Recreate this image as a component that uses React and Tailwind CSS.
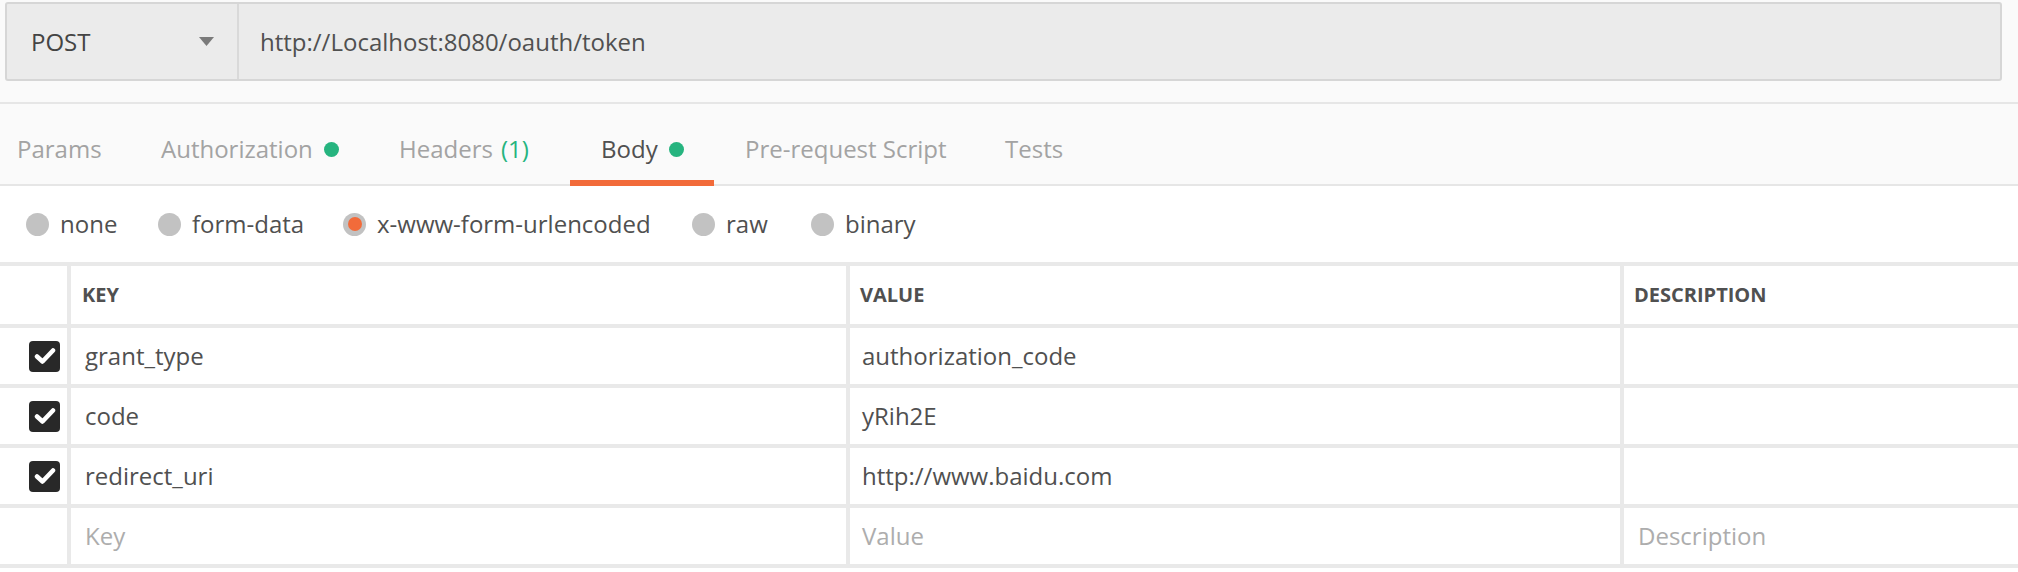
import React from 'react';

const font = { fontFamily: '"Open Sans", "Noto Sans", sans-serif' };

const tabs = [
    { label: 'Params', w: 'w-[130px]', pad: 'pl-[17px]' },
    { label: 'Authorization', w: 'w-[238px]', pad: 'pl-[31px]', dot: true },
    { label: 'Headers', w: 'w-[202px]', pad: 'pl-[31px]', count: '(1)' },
    { label: 'Body', w: 'w-[144px]', pad: 'pl-[31px]', dot: true, active: true },
    { label: 'Pre-request Script', w: 'w-[260px]', pad: 'pl-[31px]' },
    { label: 'Tests', w: 'w-[200px]', pad: 'pl-[31px]' },
];

const modes = [
    { label: 'none', w: 'w-[132px]' },
    { label: 'form-data', w: 'w-[185px]' },
    { label: 'x-www-form-urlencoded', w: 'w-[349px]', selected: true },
    { label: 'raw', w: 'w-[119px]' },
    { label: 'binary', w: 'w-[200px]' },
];

const rows = [
    { key: 'grant_type', value: 'authorization_code' },
    { key: 'code', value: 'yRih2E' },
    { key: 'redirect_uri', value: 'http://www.baidu.com' },
];

function Check() {
    return (
        <div className="ml-[29px] flex h-[31px] w-[31px] items-center justify-center rounded-[4px] bg-[#282828]">
            <svg width="22" height="18" viewBox="0 0 22 18" fill="none">
                <path d="M3 9.5 L8.5 14.5 L19 3.5" stroke="white" strokeWidth="4.5" strokeLinecap="round" strokeLinejoin="round" />
            </svg>
        </div>
    );
}

function Row({ first, children, header }) {
    return (
        <div className={`flex border-b-4 border-[#e9e9e9] ${header ? 'h-[62px]' : 'h-[60px]'}`}>
            <div className="flex w-[67px] shrink-0 items-center">{first}</div>
            {children}
        </div>
    );
}

export default function App() {
    return (
        <div style={font} className="w-[2018px] h-[572px] overflow-hidden bg-white text-[#505050]">
            {/* request line */}
            <div className="h-[104px] border-b-2 border-[#e6e6e6] bg-[#fafafa] pt-[2px] pl-[5px] pr-[16px]">
                <div className="flex h-[79px] rounded-[3px] border-2 border-[#d6d6d6] bg-[#ebebeb]">
                    <div className="flex w-[232px] shrink-0 items-center justify-between border-r-2 border-[#d9d9d9] pl-[24px] pr-[23px]">
                        <span className="text-[24px] text-[#444]">POST</span>
                        <svg width="15" height="9" viewBox="0 0 15 9">
                            <path d="M0 0 H15 L7.5 9 Z" fill="#7a7a7a" />
                        </svg>
                    </div>
                    <div className="flex items-center pl-[21px] text-[24px] text-[#505050]">
                        http://Localhost:8080/oauth/token
                    </div>
                </div>
            </div>

            {/* tabs */}
            <div className="flex h-[82px] border-b-2 border-[#e6e6e6] bg-[#fafafa]">
                {tabs.map((t) => (
                    <div key={t.label} className={`relative flex h-full shrink-0 items-center pt-[10px] ${t.w} ${t.pad}`}>
                        <span className={`text-[24px] ${t.active ? 'text-[#505050]' : 'text-[#a3a3a3]'}`}>{t.label}</span>
                        {t.count && <span className="ml-[8px] text-[24px] text-[#26b47f]">{t.count}</span>}
                        {t.dot && <span className="ml-[11px] h-[15px] w-[15px] rounded-full bg-[#26b47f]" />}
                        {t.active && <div className="absolute bottom-[-2px] left-0 h-[6px] w-full bg-[#f26b3a]" />}
                    </div>
                ))}
            </div>

            {/* body modes */}
            <div className="flex h-[76px] items-center pl-[26px]">
                {modes.map((m) => (
                    <div key={m.label} className={`flex shrink-0 items-center ${m.w}`}>
                        {m.selected ? (
                            <span className="flex h-[23px] w-[23px] items-center justify-center rounded-full bg-[#c2c2c2]">
                                <span className="h-[14px] w-[14px] rounded-full bg-[#f26b3a]" />
                            </span>
                        ) : (
                            <span className="h-[23px] w-[23px] rounded-full bg-[#c2c2c2]" />
                        )}
                        <span className="ml-[11px] text-[24px] text-[#505050]">{m.label}</span>
                    </div>
                ))}
            </div>

            {/* key/value table */}
            <div className="border-t-4 border-[#e9e9e9]">
                <Row header>
                    <div className="flex w-[779px] shrink-0 items-center border-l-4 border-[#e9e9e9] pl-[11px] text-[20px] font-bold text-[#505050]">KEY</div>
                    <div className="flex w-[774px] shrink-0 items-center border-l-4 border-[#e9e9e9] pl-[10px] text-[20px] font-bold text-[#505050]">VALUE</div>
                    <div className="flex flex-1 items-center border-l-4 border-[#e9e9e9] pl-[10px] text-[20px] font-bold text-[#505050]">DESCRIPTION</div>
                </Row>
                {rows.map((r) => (
                    <Row key={r.key} first={<Check />}>
                        <div className="flex w-[779px] shrink-0 items-center border-l-4 border-[#e9e9e9] pl-[14px] text-[24px]">{r.key}</div>
                        <div className="flex w-[774px] shrink-0 items-center border-l-4 border-[#e9e9e9] pl-[12px] text-[24px]">{r.value}</div>
                        <div className="flex flex-1 items-center border-l-4 border-[#e9e9e9]" />
                    </Row>
                ))}
                <Row>
                    <div className="flex w-[779px] shrink-0 items-center border-l-4 border-[#e9e9e9] pl-[14px] text-[24px] text-[#adadad]">Key</div>
                    <div className="flex w-[774px] shrink-0 items-center border-l-4 border-[#e9e9e9] pl-[12px] text-[24px] text-[#adadad]">Value</div>
                    <div className="flex flex-1 items-center border-l-4 border-[#e9e9e9] pl-[14px] text-[24px] text-[#adadad]">Description</div>
                </Row>
            </div>
        </div>
    );
}
